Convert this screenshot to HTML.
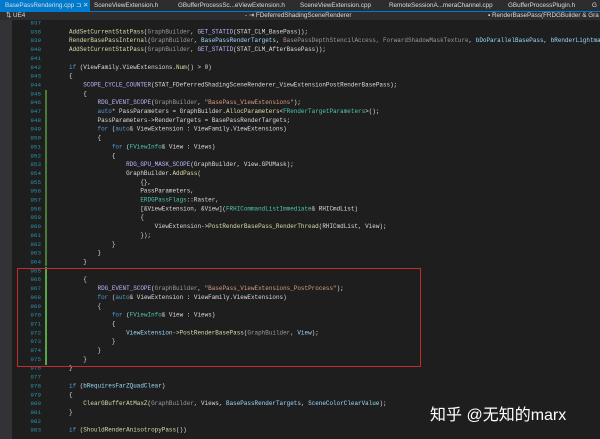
<!DOCTYPE html><html><head><meta charset="utf-8"><style>
body{margin:0;width:600px;height:439px;background:#1e1e1e;overflow:hidden;position:relative;font-family:"Liberation Mono",monospace}
.tabs{position:absolute;left:0;top:0;width:600px;height:11px;background:#2d2d30;font:6.3px "Liberation Sans",sans-serif;color:#ddd}
.tabs span{position:absolute;top:2px;white-space:nowrap}
.act{position:absolute;left:0;top:0;width:90px;height:11px;background:#007acc}
.bl{position:absolute;left:0;top:11px;width:600px;height:1px;background:#007acc}
.nav{position:absolute;left:0;top:12px;width:600px;height:8px;background:#2d2d30;font:6.3px "Liberation Sans",sans-serif;color:#ddd}
.nav span{position:absolute;top:0;white-space:nowrap}
.side{position:absolute;left:0;top:20px;width:12px;height:419px;background:#333337}
.ln{position:absolute;left:12px;top:18.5px;width:58px;text-align:right;color:#2b91af;font-size:11.8px;line-height:17.7px;white-space:pre;margin:0;transform:scale(0.5);transform-origin:0 0}
.code{position:absolute;left:69px;top:18.5px;color:#dcdcdc;font-size:11.9px;line-height:17.7px;white-space:pre;margin:0;transform:scale(0.5);transform-origin:0 0}
.f{color:#dcdcaa}.g{color:#9b9b9b}.t{color:#4ec9b0}.k{color:#569cd6}.s{color:#d69d85}.v{color:#9cdcfe}.m{color:#beb7ff}
.green{position:absolute;left:45px;width:2px;background:#57a64a}
.box{position:absolute;left:17px;top:268px;width:402px;height:97px;border:1px solid #c42b2b}
.wm{position:absolute;left:430px;top:401px;color:#fff;font:16px "Liberation Sans","Noto Sans CJK SC",sans-serif}
</style></head><body>
<div class="tabs"><div class="act"></div><span style="left:5px">BasePassRendering.cpp</span><span style="left:76px">⊐ ✕</span><span style="left:94px">SceneViewExtension.h</span><span style="left:178px">GBufferProcessSc...eViewExtension.h</span><span style="left:300px">SceneViewExtension.cpp</span><span style="left:389px">RemoteSessionA...meraChannel.cpp</span><span style="left:508px">GBufferProcessPlugin.h</span><span style="left:592px">G</span></div>
<div class="bl"></div>
<div class="nav"><span style="left:6px">⇅ UE4</span><span style="left:245px">- ⇥ FDeferredShadingSceneRenderer</span><span style="left:488px">▪ RenderBasePass(FRDGBuilder &amp; Gra</span></div>
<div class="side"></div>
<div class="green" style="top:267px;height:98px"></div>
<div class="green" style="top:90px;height:176px;background:#4a7a3a"></div>
<pre class="ln">937
938
939
940
941
942
943
944
945
946
947
948
949
950
951
952
953
954
955
956
957
958
959
960
961
962
963
964
965
966
967
968
969
970
971
972
973
974
975
976
977
978
979
980
981
982
983</pre>
<pre class="code">

<span class="f">AddSetCurrentStatPass</span>(<span class="g">GraphBuilder</span>, <span class="m">GET_STATID</span>(STAT_CLM_BasePass));
<span class="f">RenderBasePassInternal</span>(<span class="g">GraphBuilder</span>, <span class="v">BasePassRenderTargets</span>, <span class="g">BasePassDepthStencilAccess, ForwardShadowMaskTexture</span>, <span class="v">bDoParallelBasePass</span>, <span class="v">bRenderLightmapDensity</span>
<span class="f">AddSetCurrentStatPass</span>(<span class="g">GraphBuilder</span>, <span class="m">GET_STATID</span>(STAT_CLM_AfterBasePass));

<span class="k">if</span> (ViewFamily.ViewExtensions.<span class="f">Num</span>() &gt; 0)
{
    <span class="m">SCOPE_CYCLE_COUNTER</span>(STAT_FDeferredShadingSceneRenderer_ViewExtensionPostRenderBasePass);
    {
        <span class="m">RDG_EVENT_SCOPE</span>(<span class="g">GraphBuilder</span>, <span class="s">"BasePass_ViewExtensions"</span>);
        <span class="k">auto</span>* PassParameters = GraphBuilder.<span class="f">AllocParameters</span>&lt;<span class="t">FRenderTargetParameters</span>&gt;();
        PassParameters-&gt;RenderTargets = BasePassRenderTargets;
        <span class="k">for</span> (<span class="k">auto</span>&amp; ViewExtension : ViewFamily.ViewExtensions)
        {
            <span class="k">for</span> (<span class="t">FViewInfo</span>&amp; View : Views)
            {
                <span class="m">RDG_GPU_MASK_SCOPE</span>(GraphBuilder, View.GPUMask);
                GraphBuilder.<span class="f">AddPass</span>(
                    {},
                    PassParameters,
                    <span class="t">ERDGPassFlags</span>::Raster,
                    [&amp;ViewExtension, &amp;View](<span class="t">FRHICommandListImmediate</span>&amp; RHICmdList)
                    {
                        ViewExtension-&gt;<span class="f">PostRenderBasePass_RenderThread</span>(RHICmdList, View);
                    });
            }
        }
    }

    {
        <span class="m">RDG_EVENT_SCOPE</span>(<span class="g">GraphBuilder</span>, <span class="s">"BasePass_ViewExtensions_PostProcess"</span>);
        <span class="k">for</span> (<span class="k">auto</span>&amp; ViewExtension : ViewFamily.ViewExtensions)
        {
            <span class="k">for</span> (<span class="t">FViewInfo</span>&amp; View : Views)
            {
                <span class="v">ViewExtension</span>-&gt;<span class="f">PostRenderBasePass</span>(<span class="g">GraphBuilder</span>, <span class="v">View</span>);
            }
        }
    }
}

<span class="k">if</span> (<span class="v">bRequiresFarZQuadClear</span>)
{
    <span class="f">ClearGBufferAtMaxZ</span>(<span class="g">GraphBuilder</span>, Views, <span class="v">BasePassRenderTargets</span>, <span class="v">SceneColorClearValue</span>);
}

<span class="k">if</span> (<span class="f">ShouldRenderAnisotropyPass</span>())
</pre>
<div class="box"></div>
<div class="wm">知乎 @无知的marx</div>
</body></html>
